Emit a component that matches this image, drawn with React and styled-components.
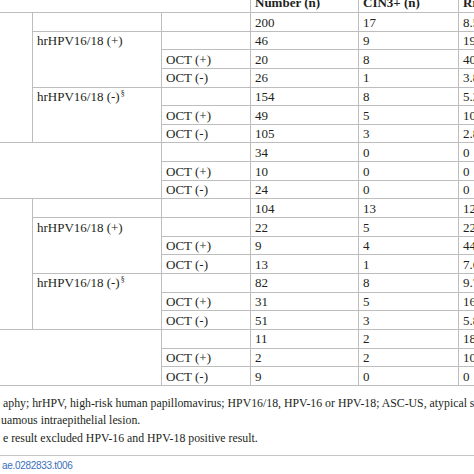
import React from 'react';
import styled, { createGlobalStyle } from 'styled-components';

const GlobalStyle = createGlobalStyle`
  html, body {
    margin: 0;
    padding: 0;
    background: #ffffff;
  }
`;

const line = '#bdbdbd';

// each row: [number, cin3+, risk]
const groups = [
  {
    kind: 'split',
    rows: [
      ['200', '17', '8.5 (5.0-13.3)'],
      ['46', '9', '19.6 (9.4-33.9)'],
      ['20', '8', '40.0 (19.1-63.9)'],
      ['26', '1', '3.8 (0.1-19.6)'],
      ['154', '8', '5.2 (2.3-10.0)'],
      ['49', '5', '10.2 (3.4-22.2)'],
      ['105', '3', '2.8 (0.6-8.1)'],
    ],
  },
  {
    kind: 'merged',
    rows: [
      ['34', '0', '0'],
      ['10', '0', '0'],
      ['24', '0', '0'],
    ],
  },
  {
    kind: 'split',
    rows: [
      ['104', '13', '12.5 (6.8-20.4)'],
      ['22', '5', '22.7 (7.8-45.4)'],
      ['9', '4', '44.4 (13.7-78.8)'],
      ['13', '1', '7.6 (0.2-36.0)'],
      ['82', '8', '9.7 (4.3-18.3)'],
      ['31', '5', '16.1 (5.5-33.7)'],
      ['51', '3', '5.8 (1.2-16.2)'],
    ],
  },
  {
    kind: 'merged',
    rows: [
      ['11', '2', '18.2 (2.3-51.8)'],
      ['2', '2', '100'],
      ['9', '0', '0'],
    ],
  },
];

const splitLabels = ['', 'hrHPV16/18 (+)', null, null, 'hrHPV16/18 (-)', null, null];
const octLabels = ['', '', 'OCT (+)', 'OCT (-)', '', 'OCT (+)', 'OCT (-)'];
const mergedOct = ['', 'OCT (+)', 'OCT (-)'];

const Values = ({ row }) => (
  <>
    <Cell>{row[0]}</Cell>
    <Cell>{row[1]}</Cell>
    <Cell>{row[2]}</Cell>
  </>
);

const SplitGroup = ({ rows }) => (
  <>
    {rows.map((row, i) => (
      <React.Fragment key={i}>
        {i === 0 && <Cell $rows={7} $noLeft />}
        {splitLabels[i] !== null && (
          <Cell $rows={i === 0 ? 1 : 3}>
            {splitLabels[i]}
            {i === 4 && <Sup>§</Sup>}
          </Cell>
        )}
        <Cell>{octLabels[i]}</Cell>
        <Values row={row} />
      </React.Fragment>
    ))}
  </>
);

const MergedGroup = ({ rows }) => (
  <>
    {rows.map((row, i) => (
      <React.Fragment key={i}>
        {i === 0 && <Cell $rows={3} $cols={2} $noLeft />}
        <Cell>{mergedOct[i]}</Cell>
        <Values row={row} />
      </React.Fragment>
    ))}
  </>
);

const App = () => {
  return (
    <Frame>
      <GlobalStyle />
      <Grid>
        <HeadCell $cols={3} $noLeft />
        <HeadCell>Number (n)</HeadCell>
        <HeadCell>CIN3+ (n)</HeadCell>
        <HeadCell>Risk of CIN3+ (%)</HeadCell>
        {groups.map((g, i) =>
          g.kind === 'split'
            ? <SplitGroup key={i} rows={g.rows} />
            : <MergedGroup key={i} rows={g.rows} />
        )}
      </Grid>
      <Notes>
        <Note $shift={3}>aphy; hrHPV, high-risk human papillomavirus; HPV16/18, HPV-16 or HPV-18; ASC-US, atypical squamous cells</Note>
        <Note $shift={1}>uamous intraepithelial lesion.</Note>
        <Note $shift={3}>e result excluded HPV-16 and HPV-18 positive result.</Note>
      </Notes>
      <Rule />
      <DoiLink>ae.0282833.t006</DoiLink>
    </Frame>
  );
};

const Frame = styled.div`
  width: 474px;
  height: 474px;
  overflow: hidden;
  font-family: "Liberation Serif", "Times New Roman", serif;
  font-size: 13px;
  color: #231f20;
`;

const Grid = styled.div`
  display: grid;
  grid-template-columns: 32px 129px 89px 108px 100px 130px;
  grid-auto-rows: 18.65px;
  width: 588px;
  margin-top: -6.65px;
  border-bottom: 1px solid ${line};
`;

const Cell = styled.div`
  box-sizing: border-box;
  grid-row: span ${p => p.$rows || 1};
  grid-column: span ${p => p.$cols || 1};
  border-top: 1px solid ${line};
  border-left: ${p => (p.$noLeft ? 'none' : `1px solid ${line}`)};
  padding: 2.5px 0 0 4px;
  line-height: 14px;
  white-space: nowrap;
  overflow: hidden;
`;

const HeadCell = styled(Cell)`
  border-top: none;
  font-weight: 700;
`;

const Sup = styled.sup`
  font-size: 8px;
  line-height: 0;
  vertical-align: 5px;
  margin-left: 1px;
`;

const Notes = styled.div`
  padding-top: 9px;
  font-size: 11.8px;
`;

const Note = styled.div`
  line-height: 17.5px;
  padding-left: ${p => p.$shift}px;
  white-space: nowrap;
`;

const Rule = styled.div`
  height: 1px;
  background: #c4c4c4;
  margin-top: 8px;
`;

const DoiLink = styled.div`
  margin-top: 4px;
  padding-left: 2px;
  font-family: "Liberation Sans", Arial, sans-serif;
  font-size: 10px;
  line-height: 12px;
  letter-spacing: -0.3px;
  color: #3a6fbd;
`;

export default App;
